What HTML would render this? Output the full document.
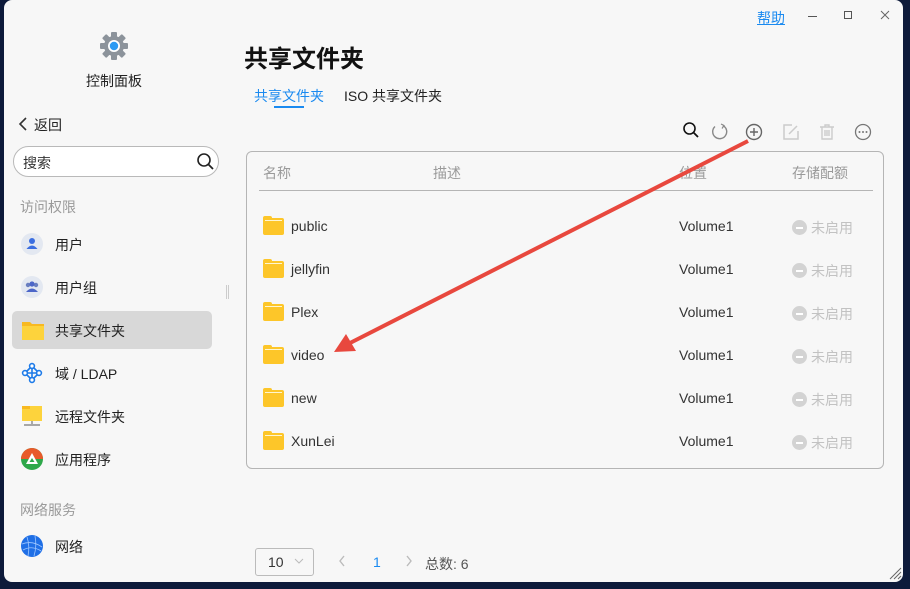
<!DOCTYPE html>
<html><head><meta charset="utf-8"><style>
*{margin:0;padding:0;box-sizing:border-box}
body{width:910px;height:589px;overflow:hidden;background:#0d1a3a;font-family:"Liberation Sans","Noto Sans CJK SC",sans-serif;position:relative}
.win{position:absolute;left:4px;top:0px;width:899px;height:582px;background:#f7f7f7;border-radius:8px;overflow:hidden}
.a{position:absolute;white-space:nowrap}
.nav{position:absolute;left:8px;width:200px;height:38px;font-size:14px;color:#222}
.nav .ic{position:absolute;left:9px;top:8px;width:22px;height:22px}
.nav span{position:absolute;left:43px;top:10px}
.row{position:absolute;left:0;width:636px;height:43px;font-size:14px;color:#333}
.row .f{position:absolute;left:16px;top:15px;width:21px;height:17px;background:#fdc629;border-radius:2px}
.row .f:before{content:"";position:absolute;left:0;top:-2px;width:9px;height:4px;background:#fdc629;border-radius:2px 2px 0 0}
.row .f:after{content:"";position:absolute;left:2px;top:2px;width:17px;height:1px;background:#fff6d0}
.row .n{position:absolute;left:44px;top:15px}
.row .v{position:absolute;left:432px;top:15px}
.row .q{position:absolute;left:545px;top:15px;color:#c2c2c2}
.row .q i{display:inline-block;width:15px;height:15px;border-radius:50%;background:#d3d3d3;vertical-align:-2px;margin-right:4px;position:relative}
.row .q i:after{content:"";position:absolute;left:4px;top:7px;width:7px;height:1.5px;background:#fff}
</style></head><body>
<div class="win">
<svg class="a" style="left:94px;top:30px" width="32" height="32" viewBox="0 0 32 32"><g fill="#8c939b"><circle cx="16" cy="16" r="10"/><g id="t"><rect x="13" y="2" width="6" height="6" rx="1"/><rect x="13" y="24" width="6" height="6" rx="1"/></g><use href="#t" transform="rotate(45 16 16)"/><use href="#t" transform="rotate(90 16 16)"/><use href="#t" transform="rotate(135 16 16)"/></g><circle cx="16" cy="16" r="6" fill="#fff"/><circle cx="16" cy="16" r="4.2" fill="#2b9af3"/></svg>
<div class="a" style="left:82px;top:71px;font-size:14px;color:#222">控制面板</div>
<svg class="a" style="left:13px;top:116px" width="12" height="16"><path d="M9 2 L3 8 L9 14" stroke="#333" stroke-width="1.6" fill="none"/></svg>
<div class="a" style="left:30px;top:115px;font-size:14px;color:#222">返回</div>
<div class="a" style="left:9px;top:146px;width:206px;height:31px;border:1px solid #b9b9b9;border-radius:16px;background:#fff"></div>
<div class="a" style="left:19px;top:153px;font-size:14px;color:#333">搜索</div>
<svg class="a" style="left:192px;top:152px" width="20" height="20"><circle cx="8" cy="8" r="6" stroke="#222" stroke-width="1.6" fill="none"/><path d="M12.5 12.5 L17 17" stroke="#222" stroke-width="1.8"/></svg>
<div class="a" style="left:16px;top:197px;font-size:14px;color:#9a9a9a">访问权限</div>
<div class="nav" style="top:225px"><svg class="ic" viewBox="0 0 22 22"><circle cx="11" cy="11" r="11" fill="#e3e8f1"/><circle cx="11" cy="8" r="3" fill="#3b6ee0"/><path d="M5.5 16 Q11 9 16.5 16Z" fill="#3b6ee0"/></svg><span>用户</span></div>
<div class="nav" style="top:268px"><svg class="ic" viewBox="0 0 22 22"><circle cx="11" cy="11" r="11" fill="#e3e8f1"/><circle cx="7" cy="9" r="2.2" fill="#6a7fc0"/><circle cx="15" cy="9" r="2.2" fill="#6a7fc0"/><circle cx="11" cy="8" r="2.6" fill="#4c66c8"/><path d="M5 16 Q11 9 17 16Z" fill="#4c66c8"/></svg><span>用户组</span></div>
<div class="a" style="left:222px;top:285px;width:3px;height:14px;border-left:1px solid #ccc;border-right:1px solid #ccc"></div>
<div class="nav" style="top:311px;background:#d8d8d8;border-radius:5px"><svg class="ic" viewBox="0 0 22 22" style="left:9px;top:9px;width:24px"><path d="M0 2h8l2 2h12v16H0z" fill="#f8b920"/><rect x="0" y="6" width="22" height="14" fill="#fdd33c"/></svg><span>共享文件夹</span></div>
<div class="nav" style="top:354px"><svg class="ic" viewBox="0 0 22 22"><g stroke="#1e7be8" stroke-width="1.6" fill="#fff"><path d="M11 4 L4 11 L11 18 L18 11Z M4 11H18 M11 4V18" fill="none"/><circle cx="11" cy="4" r="2.4"/><circle cx="4" cy="11" r="2.4"/><circle cx="18" cy="11" r="2.4"/><circle cx="11" cy="18" r="2.4"/></g></svg><span>域 / LDAP</span></div>
<div class="nav" style="top:397px"><svg class="ic" viewBox="0 0 22 22"><rect x="1" y="1" width="20" height="15" fill="#fdd33c"/><rect x="1" y="1" width="8" height="3" fill="#f8b920"/><path d="M11 16V19 M3 20H19" stroke="#777" stroke-width="1.2"/></svg><span>远程文件夹</span></div>
<div class="nav" style="top:440px"><svg class="ic" viewBox="0 0 22 22"><circle cx="11" cy="11" r="11" fill="#2ea84a"/><path d="M0 11 A11 11 0 0 1 22 11Z" fill="#e85a2a"/><path d="M11 5 L5 16 H17Z" fill="#fff"/><path d="M11 10 L8.5 14 H13.5Z" fill="#2ea84a"/></svg><span>应用程序</span></div>
<div class="a" style="left:16px;top:500px;font-size:14px;color:#9a9a9a">网络服务</div>
<div class="nav" style="top:527px"><svg class="ic" viewBox="0 0 22 22"><circle cx="11" cy="11" r="11" fill="#1f6fe6"/><path d="M1 9 Q11 5 21 12 M2 15 Q11 10 20 16 M6 2 Q9 11 7 21 M14 1 Q16 11 13 21" stroke="#9fc7ff" stroke-width="0.8" fill="none"/></svg><span>网络</span></div>
<div class="a" style="left:753px;top:8px;font-size:14px;color:#1a8af0;text-decoration:underline">帮助</div>
<div class="a" style="left:804px;top:16px;width:9px;height:1px;background:#555"></div>
<div class="a" style="left:840px;top:11px;width:8px;height:8px;border:1px solid #555"></div>
<svg class="a" style="left:876px;top:10px" width="10" height="10"><path d="M1 1L9 9M9 1L1 9" stroke="#666" stroke-width="1"/></svg>
<div class="a" style="left:240px;top:39px;font-size:24px;font-weight:bold;color:#111">共享文件夹</div>
<div class="a" style="left:250px;top:86px;font-size:14px;color:#1a8af0">共享文件夹</div>
<div class="a" style="left:270px;top:106px;width:30px;height:2px;background:#1a8af0"></div>
<div class="a" style="left:340px;top:86px;font-size:14px;color:#222">ISO 共享文件夹</div>
<svg class="a" style="left:678px;top:121px" width="20" height="20"><circle cx="7.5" cy="7.5" r="5.5" stroke="#111" stroke-width="1.6" fill="none"/><path d="M11.5 11.5 L16 16" stroke="#111" stroke-width="1.8"/></svg>
<svg class="a" style="left:706px;top:122px" width="20" height="20"><path d="M13 3.5 A7 7 0 1 1 5 4.5" stroke="#888" stroke-width="1.4" fill="none"/><path d="M11 2 L14 3.5 L12 6.5" stroke="#888" stroke-width="1.2" fill="none"/></svg>
<svg class="a" style="left:740px;top:122px" width="20" height="20"><circle cx="10" cy="10" r="7.5" stroke="#666" stroke-width="1.4" fill="none"/><path d="M10 6V14M6 10H14" stroke="#666" stroke-width="1.4"/></svg>
<svg class="a" style="left:777px;top:122px" width="20" height="20"><path d="M11 3H3V17H17V9" stroke="#ccc" stroke-width="1.5" fill="none"/><path d="M8 12L16 4" stroke="#ccc" stroke-width="1.5"/></svg>
<svg class="a" style="left:813px;top:122px" width="20" height="20"><path d="M3 5H17M8 5V3H12V5M5 5V17H15V5M8 8V14M10 8V14M12 8V14" stroke="#ccc" stroke-width="1.4" fill="none"/></svg>
<svg class="a" style="left:849px;top:122px" width="20" height="20"><circle cx="10" cy="10" r="7.5" stroke="#777" stroke-width="1.3" fill="none"/><circle cx="6.5" cy="10" r="1" fill="#777"/><circle cx="10" cy="10" r="1" fill="#777"/><circle cx="13.5" cy="10" r="1" fill="#777"/></svg>
<div class="a" style="left:242px;top:151px;width:638px;height:318px;border:1px solid #b5b5b5;border-radius:6px">
  <div class="a" style="left:16px;top:11px;font-size:14px;color:#9a9a9a">名称</div>
  <div class="a" style="left:186px;top:11px;font-size:14px;color:#9a9a9a">描述</div>
  <div class="a" style="left:432px;top:11px;font-size:14px;color:#9a9a9a">位置</div>
  <div class="a" style="left:545px;top:11px;font-size:14px;color:#9a9a9a">存储配额</div>
  <div class="a" style="left:12px;top:38px;width:614px;height:1px;background:#b5b5b5"></div>
  <div class="row" style="top:51px"><i class="f"></i><span class="n">public</span><span class="v">Volume1</span><span class="q"><i></i>未启用</span></div>
  <div class="row" style="top:94px"><i class="f"></i><span class="n">jellyfin</span><span class="v">Volume1</span><span class="q"><i></i>未启用</span></div>
  <div class="row" style="top:137px"><i class="f"></i><span class="n">Plex</span><span class="v">Volume1</span><span class="q"><i></i>未启用</span></div>
  <div class="row" style="top:180px"><i class="f"></i><span class="n">video</span><span class="v">Volume1</span><span class="q"><i></i>未启用</span></div>
  <div class="row" style="top:223px"><i class="f"></i><span class="n">new</span><span class="v">Volume1</span><span class="q"><i></i>未启用</span></div>
  <div class="row" style="top:266px"><i class="f"></i><span class="n">XunLei</span><span class="v">Volume1</span><span class="q"><i></i>未启用</span></div>
</div>
<div class="a" style="left:251px;top:548px;width:59px;height:28px;border:1px solid #bbb;border-radius:3px"></div>
<div class="a" style="left:264px;top:554px;font-size:14px;color:#333">10</div>
<svg class="a" style="left:290px;top:557px" width="10" height="8"><path d="M1 2L5 6L9 2" stroke="#bbb" fill="none"/></svg>
<svg class="a" style="left:334px;top:555px" width="8" height="12"><path d="M6 1L2 6L6 11" stroke="#bbb" stroke-width="1.4" fill="none"/></svg>
<div class="a" style="left:369px;top:554px;font-size:14px;color:#1a8af0">1</div>
<svg class="a" style="left:401px;top:555px" width="8" height="12"><path d="M2 1L6 6L2 11" stroke="#bbb" stroke-width="1.4" fill="none"/></svg>
<div class="a" style="left:421px;top:554px;font-size:14px;color:#555">总数: 6</div>
<svg class="a" style="left:884px;top:566px" width="14" height="14"><path d="M2 13L13 2M6 13L13 6M10 13L13 10" stroke="#666"/></svg>
</div>
<svg class="a" style="left:0;top:0" width="910" height="589"><path d="M748 141 L350 343" stroke="#e8483e" stroke-width="4"/><path d="M334 352 L346 334 L356 351Z" fill="#e8483e"/></svg>
</body></html>
